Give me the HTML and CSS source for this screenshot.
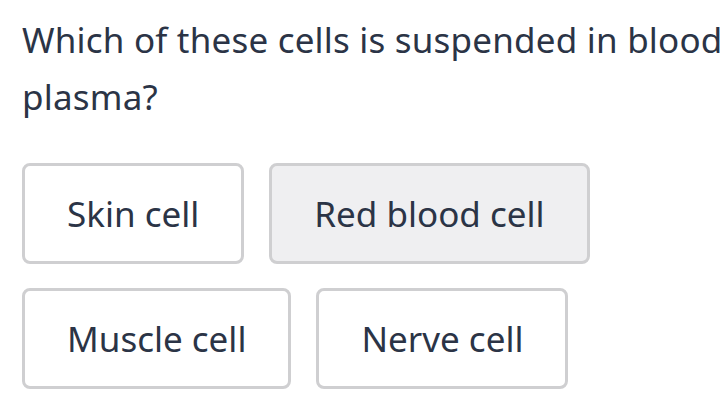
FILE: index.html
```html
<!DOCTYPE html>
<html lang="en">

<head>
    <meta charset="UTF-8">
    <meta name="viewport" content="width=device-width, initial-scale=1.0">
    <title>Quiz question</title>
    <link rel="stylesheet" href="styles.css">
</head>

<body>
    <div id="quiz">
        <p class="question">Which of these cells is suspended in blood plasma?</p>
        <div class="answers">
            <button class="answer">Skin cell</button>
            <button class="answer selected">Red blood cell</button>
            <button class="answer">Muscle cell</button>
            <button class="answer">Nerve cell</button>
        </div>
    </div>
</body>

</html>
```

FILE: styles.css
```css
body {
    margin: 0;
    background: #fff;
    font-family: "Noto Sans", "Open Sans", sans-serif;
    color: #2b3446;
    overflow: hidden;
}

#quiz {
    padding: 11px 0 0 22px;
}

.question {
    font-size: 35px;
    line-height: 57px;
    letter-spacing: 0.2px;
    margin: 0;
    width: 710px;
}

.answers {
    display: flex;
    flex-wrap: wrap;
    gap: 24px 25px;
    margin-top: 38px;
    width: 700px;
}

.answer {
    font-family: inherit;
    font-size: 35px;
    color: #2b3446;
    background: #fff;
    border: 3px solid #cfcfd1;
    border-radius: 8px;
    height: 101px;
    padding: 0 42px;
}

.answer.selected {
    background: #efeff1;
}
```
